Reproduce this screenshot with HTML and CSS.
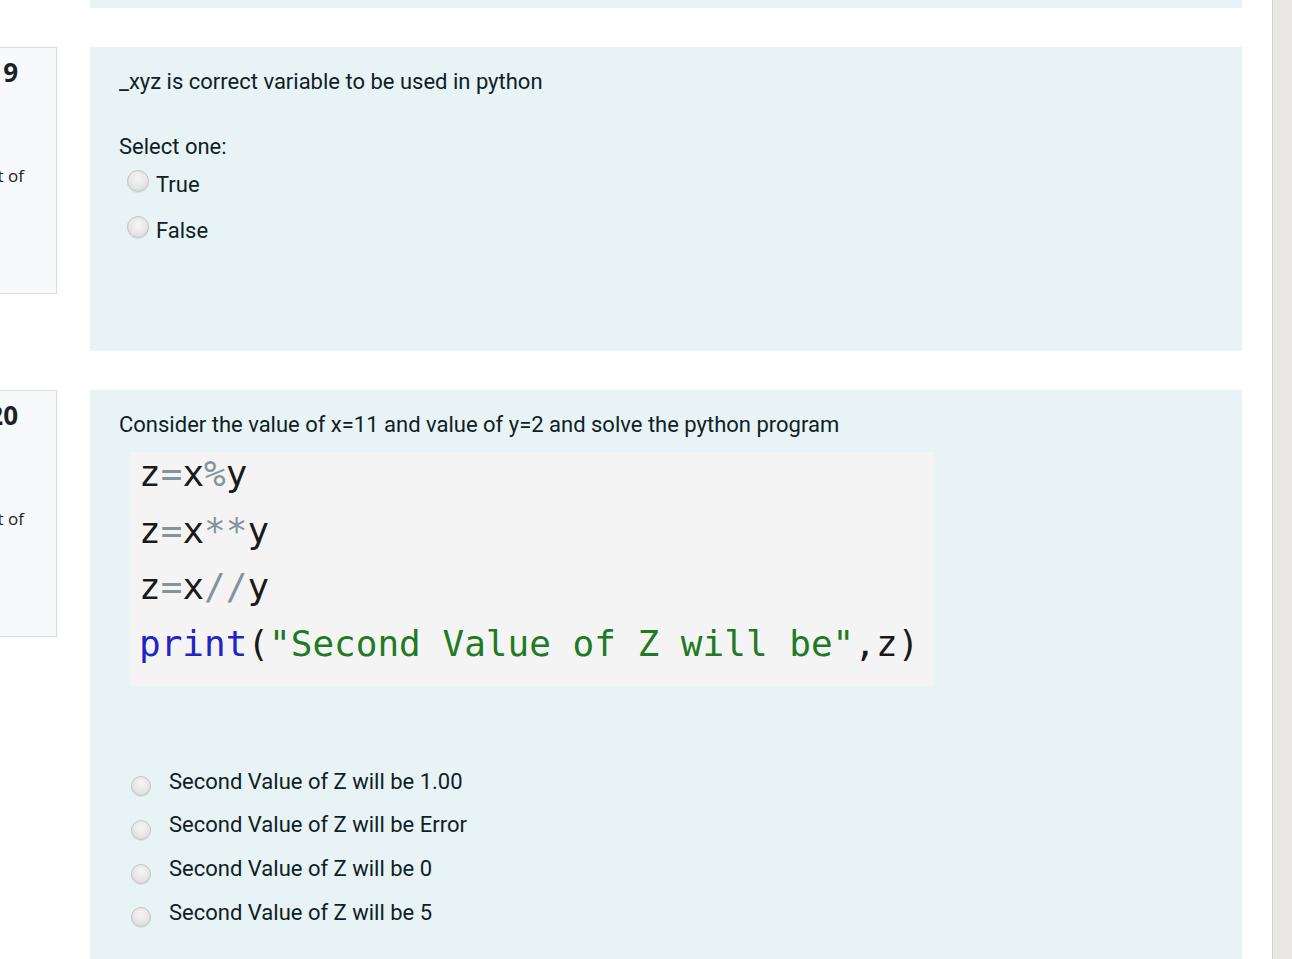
FILE: index.html
```html
<!DOCTYPE html>
<html lang="en">
<head>
<meta charset="utf-8">
<title>Quiz</title>
<link rel="stylesheet" href="styles.css">
</head>
<body>
<div class="page">
  <main class="main">
    <div class="row row-top">
      <div class="content content-tail"></div>
    </div>

    <div class="row">
      <div class="info">
        <div class="info-no">Question <span class="qno">9</span></div>
        <div class="info-grade">Marked out of</div>
      </div>
      <div class="content">
        <div class="qtext">_xyz is correct variable to be used in python</div>
        <div class="prompt">Select one:</div>
        <label class="opt opt-tf"><span class="radio radio-lg"></span><span class="opt-text">True</span></label>
        <label class="opt opt-tf"><span class="radio radio-lg"></span><span class="opt-text">False</span></label>
      </div>
    </div>

    <div class="row">
      <div class="info">
        <div class="info-no">Question <span class="qno">20</span></div>
        <div class="info-grade">Marked out of</div>
      </div>
      <div class="content content-last">
        <div class="qtext">Consider the value of x=11 and value of y=2 and solve the python program</div>
        <div class="code">
          <div class="code-line">z<span class="op">=</span>x<span class="op">%</span>y</div>
          <div class="code-line">z<span class="op">=</span>x<span class="op">**</span>y</div>
          <div class="code-line">z<span class="op">=</span>x<span class="op">//</span>y</div>
          <div class="code-line"><span class="kw">print</span>(<span class="str">"Second Value of Z will be"</span>,z)</div>
        </div>
        <div class="options">
          <label class="opt opt-ml"><span class="radio radio-sm"></span><span class="opt-text">Second Value of Z will be 1.00</span></label>
          <label class="opt opt-ml"><span class="radio radio-sm"></span><span class="opt-text">Second Value of Z will be Error</span></label>
          <label class="opt opt-ml"><span class="radio radio-sm"></span><span class="opt-text">Second Value of Z will be 0</span></label>
          <label class="opt opt-ml"><span class="radio radio-sm"></span><span class="opt-text">Second Value of Z will be 5</span></label>
        </div>
      </div>
    </div>
  </main>
  <div class="scrollbar"></div>
</div>
</body>
</html>
```

FILE: styles.css
```css
html, body {
  margin: 0;
  padding: 0;
  background: #ffffff;
}

body {
  font-family: Roboto, "Liberation Sans", sans-serif;
  color: #0f2125;
}

.page {
  display: flex;
  width: 1292px;
  height: 959px;
  overflow: hidden;
}

.main {
  width: 1272px;
  flex: none;
  display: flex;
  flex-direction: column;
  gap: 39px;
}

.row {
  display: grid;
  grid-template-columns: 257px 1152px;
  column-gap: 33px;
  align-items: start;
  margin-left: -200px;
}

.row-top .content {
  grid-column: 2;
}

.content {
  background: #e7f3f5;
  padding: 20px 29px 97px 29px;
}

.content-tail {
  height: 8px;
  padding: 0;
}

.content-last {
  padding-bottom: 60px;
}

/* info box */
.info {
  box-sizing: border-box;
  height: 247px;
  background: #f8f9fa;
  border: 1px solid #d9dadb;
  font-family: "Open Sans", "Liberation Sans", sans-serif;
  color: #1d2125;
  text-align: right;
  white-space: nowrap;
}

.info-no {
  font-size: 17px;
  line-height: 30px;
  margin-top: 9px;
  padding-right: 38px;
}

.qno {
  font-size: 26px;
  font-weight: 700;
}

.info-grade {
  font-size: 17px;
  line-height: 24px;
  margin-top: 73px;
  padding-right: 32px;
}

/* question text */
.qtext {
  font-size: 22px;
  line-height: 30px;
}

.prompt {
  font-size: 22px;
  line-height: 30px;
  margin-top: 35px;
}

.opt {
  display: flex;
  align-items: flex-start;
  font-size: 22px;
}

.opt-tf {
  line-height: 46px;
}

.opt-tf .radio {
  margin-left: 8px;
  margin-top: 8px;
  margin-right: 7px;
}

.radio {
  flex: none;
  box-sizing: border-box;
  border-radius: 50%;
  background: radial-gradient(circle at 50% 38%, #f6f6f6 0%, #e6e6e6 55%, #d2d2d2 100%);
  border: 1px solid #c4c4c4;
  box-shadow: 0 1px 1px rgba(0, 0, 0, 0.08);
}

.radio-lg {
  width: 22px;
  height: 22px;
}

.radio-sm {
  width: 20px;
  height: 20px;
}

/* code */
.code {
  margin-top: 12px;
  margin-left: 11px;
  width: 804px;
  box-sizing: border-box;
  background: #f4f4f4;
  padding: 0 0 20px 9px;
  font-family: "DejaVu Sans Mono", "Liberation Mono", monospace;
  font-size: 36px;
  color: #1a1a1a;
  display: flex;
  flex-direction: column;
  gap: 12.67px;
}

.code-line {
  line-height: 44px;
  white-space: pre;
}

.op {
  color: #86939b;
}

.kw {
  color: #2424c4;
}

.str {
  color: #1f7a24;
}

/* multi-line options */
.options {
  margin-top: 73.7px;
}

.opt-ml {
  line-height: 43.67px;
}

.opt-ml .radio {
  margin-left: 12px;
  margin-top: 16.5px;
  margin-right: 18px;
}

/* scrollbar */
.scrollbar {
  width: 20px;
  flex: none;
  background: #e9e8e5;
  border-left: 1px solid #d2d1ce;
  box-sizing: border-box;
}
```
